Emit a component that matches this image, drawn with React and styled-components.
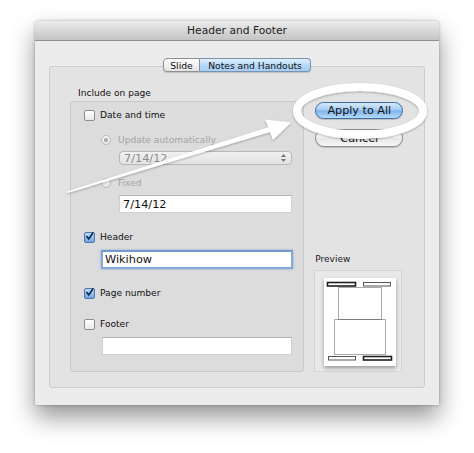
import React from 'react';
import styled, { createGlobalStyle } from 'styled-components';

const GlobalStyle = createGlobalStyle`
  html, body {
    margin: 0;
    padding: 0;
    background: #ffffff;
  }
  body {
    font-family: "DejaVu Sans", "Liberation Sans", sans-serif;
    color: #1a1a1a;
  }
`;

export default function App() {
  return (
    <Page>
      <GlobalStyle />
      <Window>
        <TitleBar>Header and Footer</TitleBar>
        <Body>
          <Tabs>
            <Tab width={37}>Slide</Tab>
            <Tab width={111} selected>Notes and Handouts</Tab>
          </Tabs>
          <GroupBox>
            <LeftColumn>
              <SectionLabel>Include on page</SectionLabel>
              <InnerBox>
                <CheckRow>
                  <CheckBox />
                  <RowLabel>Date and time</RowLabel>
                </CheckRow>
                <RadioRow top={13}>
                  <Radio checked />
                  <RowLabel disabled>Update automatically</RowLabel>
                </RadioRow>
                <Select>
                  <span>7/14/12</span>
                  <svg width="7" height="10" viewBox="0 0 7 10">
                    <path d="M3.5 1 L6 4 H1 Z" fill="#777" />
                    <path d="M3.5 9 L6 6 H1 Z" fill="#777" />
                  </svg>
                </Select>
                <RadioRow top={12}>
                  <Radio />
                  <RowLabel disabled>Fixed</RowLabel>
                </RadioRow>
                <TextField left={48} top={6} width={173}>7/14/12</TextField>
                <CheckRow top={18}>
                  <CheckBox checked />
                  <RowLabel>Header</RowLabel>
                </CheckRow>
                <TextField left={30} top={7} width={192} focused>Wikihow</TextField>
                <CheckRow top={18}>
                  <CheckBox checked />
                  <RowLabel>Page number</RowLabel>
                </CheckRow>
                <CheckRow top={19}>
                  <CheckBox />
                  <RowLabel>Footer</RowLabel>
                </CheckRow>
                <TextField left={31} top={7} width={190} />
              </InnerBox>
            </LeftColumn>
            <RightColumn>
              <PushButton primary>Apply to All</PushButton>
              <PushButton>Cancel</PushButton>
              <PreviewLabel>Preview</PreviewLabel>
              <PreviewBox>
                <PreviewPage>
                  <svg width="72" height="88" viewBox="0 0 72 88">
                    <rect x="3.5" y="4.5" width="28" height="3.5" fill="#fff" stroke="#1e1e1e" strokeWidth="1.6" />
                    <rect x="39.5" y="4.5" width="27" height="3.5" fill="#fff" stroke="#555" strokeWidth="1" />
                    <rect x="14.5" y="9.5" width="43" height="32" fill="none" stroke="#555" strokeWidth="1" strokeDasharray="1 1" />
                    <rect x="10.5" y="41.5" width="51" height="35" fill="none" stroke="#555" strokeWidth="1" strokeDasharray="1 1" />
                    <rect x="4.5" y="78.5" width="27" height="3.5" fill="#fff" stroke="#555" strokeWidth="1" />
                    <rect x="39.5" y="78.5" width="28" height="3.5" fill="#fff" stroke="#1e1e1e" strokeWidth="1.6" />
                  </svg>
                </PreviewPage>
              </PreviewBox>
            </RightColumn>
          </GroupBox>
        </Body>
      </Window>
      <Annotation width="474" height="453" viewBox="0 0 474 453">
        <defs>
          <filter id="soft" x="-10%" y="-30%" width="120%" height="160%">
            <feDropShadow dx="0" dy="1" stdDeviation="1.2" floodColor="#000" floodOpacity="0.3" />
          </filter>
        </defs>
        <ellipse cx="360" cy="111" rx="63" ry="24" fill="none" stroke="#fff" strokeWidth="8" filter="url(#soft)" />
        <polygon
          points="67,191.5 268.3,127.2 265,119.5 291,122.5 273,140 270,132 67.5,193"
          fill="#fff"
          filter="url(#soft)"
        />
      </Annotation>
    </Page>
  );
}

function CheckBox({ checked }) {
  return (
    <Box checked={checked}>
      {checked && (
        <svg width="11" height="11" viewBox="0 0 11 11">
          <path d="M2.2 5.6 L4.6 8.4 L9.6 1.2" fill="none" stroke="#13284d" strokeWidth="2" strokeLinecap="round" />
        </svg>
      )}
    </Box>
  );
}

function Radio({ checked }) {
  return <RadioCircle>{checked && <Dot />}</RadioCircle>;
}

const Page = styled.div`
  position: relative;
  width: 474px;
  height: 453px;
  padding: 21px 0 0 35px;
  box-sizing: border-box;
  overflow: hidden;
`;

const Window = styled.div`
  width: 404px;
  height: 384px;
  background: #ececec;
  border-radius: 4px 4px 0 0;
  box-shadow: 0 12px 24px rgba(0, 0, 0, 0.42), 0 0 3px rgba(0, 0, 0, 0.3);
  display: flex;
  flex-direction: column;
`;

const TitleBar = styled.div`
  flex: none;
  height: 19px;
  border-bottom: 1px solid #8e8e8e;
  border-radius: 4px 4px 0 0;
  background: linear-gradient(#ececec, #c4c4c4);
  display: flex;
  align-items: center;
  justify-content: center;
  font-size: 10.7px;
  color: #222;
`;

const Body = styled.div`
  flex: 1;
  display: flex;
  flex-direction: column;
  align-items: center;
  padding: 17px 14px 17px 14px;
  min-height: 0;
`;

const Tabs = styled.div`
  position: relative;
  z-index: 1;
  display: flex;
  height: 15px;
  margin-bottom: -6px;
  box-shadow: 0 1px 1px rgba(0, 0, 0, 0.15);
  border-radius: 4px;
`;

const Tab = styled.div`
  width: ${(p) => p.width}px;
  box-sizing: border-box;
  display: flex;
  align-items: center;
  justify-content: center;
  font-size: 9.2px;
  color: #111;
  border: 1px solid ${(p) => (p.selected ? '#7c92ad' : '#8e8e8e')};
  background: ${(p) =>
    p.selected
      ? 'linear-gradient(#dff0fd, #b3d7f7 55%, #a5cff5)'
      : 'linear-gradient(#ffffff, #f0f0f0 55%, #e4e4e4)'};
  border-radius: ${(p) => (p.selected ? '0 4px 4px 0' : '4px 0 0 4px')};
  ${(p) => (p.selected ? 'border-left: none;' : '')}
`;

const GroupBox = styled.div`
  align-self: stretch;
  flex: 1;
  display: flex;
  gap: 11px;
  padding: 21px 20px 15px 20px;
  background: #e3e3e3;
  border: 1px solid #cdcdcd;
  border-radius: 3px;
`;

const LeftColumn = styled.div`
  width: 235px;
  display: flex;
  flex-direction: column;
`;

const SectionLabel = styled.div`
  height: 13px;
  padding-left: 8px;
  font-size: 9.1px;
  line-height: 11px;
  color: #111;
`;

const InnerBox = styled.div`
  flex: 1;
  display: flex;
  flex-direction: column;
  align-items: flex-start;
  padding: 7px 0 0 13px;
  background: #dcdcdc;
  border: 1px solid #c9c9c9;
  border-radius: 3px;
`;

const CheckRow = styled.div`
  display: flex;
  align-items: center;
  gap: 5px;
  height: 12px;
  margin-top: ${(p) => p.top || 0}px;
`;

const RadioRow = styled(CheckRow)`
  padding-left: 17px;
  gap: 7px;
`;

const RowLabel = styled.span`
  font-size: 9.1px;
  color: ${(p) => (p.disabled ? '#a3a3a3' : '#111')};
`;

const Box = styled.div`
  width: 11px;
  height: 11px;
  box-sizing: border-box;
  border-radius: 2px;
  border: 1px solid ${(p) => (p.checked ? '#4b77ad' : '#8d8d8d')};
  background: ${(p) =>
    p.checked ? 'linear-gradient(#b9d8f6, #6fa6e0)' : 'linear-gradient(#ffffff, #e9e9e9)'};
  display: flex;
  align-items: center;
  justify-content: center;
  svg {
    margin: -1px 0 0 0;
  }
`;

const RadioCircle = styled.div`
  width: 10px;
  height: 10px;
  box-sizing: border-box;
  border-radius: 50%;
  border: 1px solid #b9b9b9;
  background: linear-gradient(#f7f7f7, #e4e4e4);
  display: flex;
  align-items: center;
  justify-content: center;
`;

const Dot = styled.div`
  width: 4px;
  height: 4px;
  border-radius: 50%;
  background: #a8a8a8;
`;

const Select = styled.div`
  margin: 5px 0 0 35px;
  width: 173px;
  height: 14px;
  box-sizing: border-box;
  display: flex;
  align-items: center;
  justify-content: space-between;
  padding: 0 4px 0 4px;
  border: 1px solid #b8b8b8;
  border-radius: 4px;
  background: linear-gradient(#f1f1f1, #e2e2e2);
  font-size: 11.3px;
  color: #8a8a8a;
`;

const TextField = styled.div`
  margin: ${(p) => p.top}px 0 0 ${(p) => p.left - 13}px;
  width: ${(p) => p.width}px;
  height: ${(p) => (p.focused ? 19 : 18)}px;
  box-sizing: border-box;
  display: flex;
  align-items: center;
  padding-left: ${(p) => (p.focused ? 2 : 3)}px;
  background: #fff;
  font-size: 11.3px;
  color: #111;
  border: ${(p) => (p.focused ? '2px solid #82aad8' : '1px solid #cfcfcf')};
  border-top-color: ${(p) => (p.focused ? '#6f9bd0' : '#b3b3b3')};
  box-shadow: ${(p) => (p.focused ? '0 0 2px rgba(70, 120, 200, 0.6)' : 'none')};
`;

const RightColumn = styled.div`
  width: 89px;
  display: flex;
  flex-direction: column;
  padding-top: 14px;
`;

const PushButton = styled.div`
  width: 88px;
  height: ${(p) => (p.primary ? 17 : 18)}px;
  margin-top: ${(p) => (p.primary ? 0 : 10)}px;
  box-sizing: border-box;
  border-radius: 9px;
  display: flex;
  align-items: center;
  justify-content: center;
  font-size: 11.2px;
  color: #111;
  border: 1px solid ${(p) => (p.primary ? '#3d6ea6' : '#8f8f8f')};
  background: ${(p) =>
    p.primary
      ? 'linear-gradient(#d6e9fb, #a2caf2 48%, #7db3eb 52%, #b4dcfd)'
      : 'linear-gradient(#ffffff, #f3f3f3 48%, #e6e6e6 52%, #f6f6f6)'};
  box-shadow: 0 1px 1px rgba(0, 0, 0, 0.18);
`;

const PreviewLabel = styled.div`
  margin-top: 106px;
  height: 12px;
  font-size: 9px;
  line-height: 12px;
  color: #1a1a1a;
`;

const PreviewBox = styled.div`
  margin-top: 5px;
  margin-left: -1px;
  width: 88px;
  height: 102px;
  box-sizing: border-box;
  background: #e9e9e9;
  border: 1px solid #d4d4d4;
  padding: 7px 0 0 9px;
`;

const PreviewPage = styled.div`
  width: 72px;
  height: 88px;
  background: #fff;
  box-shadow: 0 2px 4px rgba(0, 0, 0, 0.35);
  svg {
    display: block;
  }
`;

const Annotation = styled.svg`
  position: absolute;
  top: 0;
  left: 0;
  pointer-events: none;
`;
